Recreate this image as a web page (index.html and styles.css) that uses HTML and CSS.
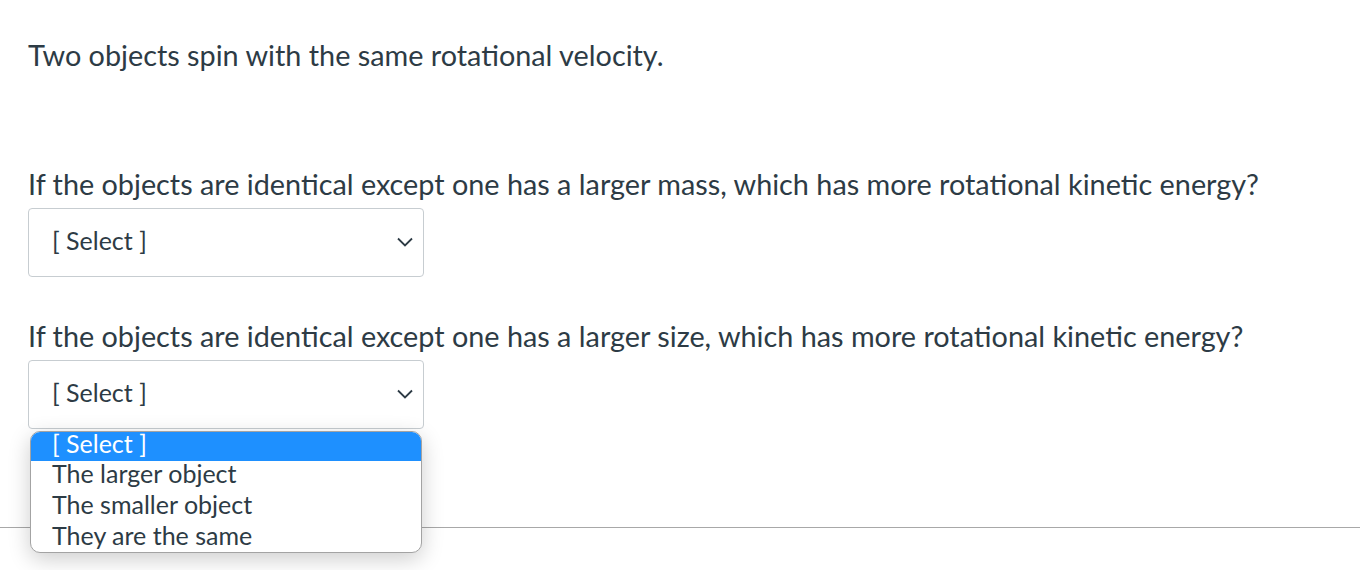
FILE: index.html
```html
<!DOCTYPE html>
<html lang="en">
<head>
    <meta charset="UTF-8">
    <meta name="viewport" content="width=device-width, initial-scale=1.0">
    <title>Quiz Question</title>
    <link rel="stylesheet" href="styles.css">
</head>
<body>
    <div class="question">
        <p class="intro">Two objects spin with the same rotational velocity.</p>

        <p class="prompt">If the objects are identical except one has a larger mass, which has more rotational kinetic energy?</p>
        <div class="select-wrap">
            <div class="select-box">
                <span>[ Select ]</span>
                <svg class="chevron" width="16" height="10" viewBox="0 0 16 10">
                    <path d="M1 1.5 L8 8.5 L15 1.5" fill="none" stroke="#2d3b45" stroke-width="1.8"/>
                </svg>
            </div>
        </div>

        <p class="prompt">If the objects are identical except one has a larger size, which has more rotational kinetic energy?</p>
        <div class="select-wrap last">
            <div class="select-box">
                <span>[ Select ]</span>
                <svg class="chevron" width="16" height="10" viewBox="0 0 16 10">
                    <path d="M1 1.5 L8 8.5 L15 1.5" fill="none" stroke="#2d3b45" stroke-width="1.8"/>
                </svg>
            </div>
            <ul class="options">
                <li class="active">[ Select ]</li>
                <li>The larger object</li>
                <li>The smaller object</li>
                <li>They are the same</li>
            </ul>
        </div>
    </div>
    <div class="divider"></div>
    <div class="footer-space"></div>
</body>
</html>
```

FILE: styles.css
```css
* {
    box-sizing: border-box;
}

body {
    margin: 0;
    padding: 0;
    font-family: Lato, "Liberation Sans", sans-serif;
    color: #2d3b45;
    background-color: #fff;
}

.question {
    padding: 35px 28px 0;
}

.intro {
    margin: 0 0 89px;
    font-size: 28.8px;
    line-height: 40px;
}

.prompt {
    margin: 0 0 4px;
    font-size: 28.8px;
    line-height: 40px;
}

.select-wrap {
    position: relative;
    width: 396px;
    margin-bottom: 39px;
}

.select-wrap.last {
    margin-bottom: 98px;
}

.select-box {
    height: 69px;
    border: 1px solid #c7cdd1;
    border-radius: 4px;
    display: flex;
    align-items: center;
    justify-content: space-between;
    padding: 0 10px 6px 23px;
    font-size: 25px;
    background-color: #fff;
}

.chevron {
    margin-top: 4px;
}

.options {
    position: absolute;
    top: 71px;
    left: 2px;
    width: 392px;
    margin: 0;
    padding: 0;
    list-style: none;
    background-color: #fff;
    border: 1px solid #a3a3a3;
    border-radius: 10px;
    box-shadow: 0 6px 22px rgba(0, 0, 0, 0.2);
    z-index: 2;
    font-size: 25px;
}

.options li {
    height: 31px;
    line-height: 24px;
    padding-left: 21px;
    color: #2d3b45;
}

.options li:last-child {
    height: 29px;
}

.options li.active {
    background-color: #1e90ff;
    color: #fff;
    height: 29px;
    line-height: 23px;
    border-radius: 9px 9px 0 0;
}

.divider {
    height: 1px;
    background-color: #a8a8a8;
}

.footer-space {
    height: 42px;
}
```
